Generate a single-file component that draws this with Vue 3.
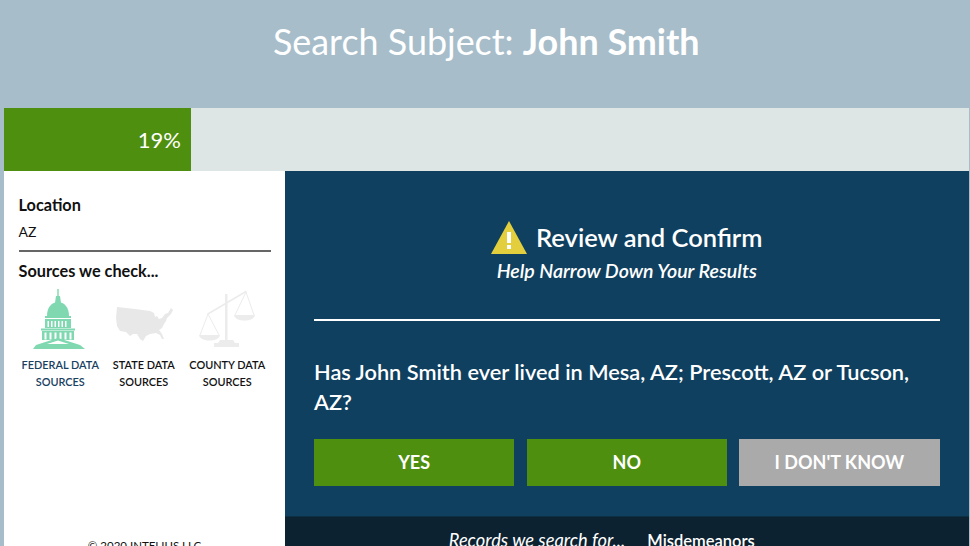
<template>
  <div class="page">
    <header class="subject">
      <h1>Search Subject: <b>{{ subject }}</b></h1>
    </header>
    <div class="progress">
      <div class="progress-bar">{{ percent }}%</div>
    </div>
    <div class="main">
      <aside class="side">
        <h3>Location</h3>
        <div class="loc">AZ</div>
        <h3 class="sources-title">Sources we check...</h3>
        <div class="sources">
          <div class="source active">
            <svg viewBox="0 0 66 66" width="66" height="66">
              <g fill="#7fd8b0">
                <rect x="30.300" y="3" width="1.400" height="7" />
                <path d="M29 10h4l1 7h-6z" />
                <path d="M20 30c0-9 5-14 11-14s11 5 11 14z" />
                <rect x="18" y="30" width="26" height="2" />
                <path d="M18 33h26v9H18zM20.500 35v6h1.500v-6zM24 35v6h1.500v-6zM27.500 35v6h1.500v-6zM31 35v6h1.500v-6zM34.500 35v6h1.500v-6zM38 35v6h1.500v-6z" fill-rule="evenodd" />
                <rect x="14" y="42.500" width="34" height="2" />
                <path d="M15 45h32v9H15zM17.500 46.500v7h2v-7zM22.500 46.500v7h2v-7zM27.500 46.500v7h2v-7zM32.500 46.500v7h2v-7zM37.500 46.500v7h2v-7zM42.500 46.500v7h2v-7z" fill-rule="evenodd" />
                <path d="M9 59l22-7 22 7zM20 58h22l-11-3.500z" fill-rule="evenodd" />
                <path d="M6 63l3-4h44l5 4z" />
              </g>
            </svg>
            <span>FEDERAL DATA SOURCES</span>
          </div>
          <div class="source">
            <svg viewBox="0 -10 70 66" width="70" height="66">
              <path fill="#e8e8e8" d="M8 11L26 13L41 15L45 17L46 21L48 20L50 23L53 22L56 18L59 17L62 12L64 14L62 18L58 22L57 25L55 28L53 32L50 34L53 38L55 43L53 43L51 39L47 37L41 38L37 40L34 45L31 43L28 38L24 38L21 40L17 36L11 35L8 30L7 22Z" />
            </svg>
            <span>STATE DATA SOURCES</span>
          </div>
          <div class="source">
            <svg viewBox="0 0 66 66" width="66" height="66">
              <g fill="#ececec">
                <rect x="31" y="8" width="2.500" height="46" />
                <path d="M26 54h13l2 3H24zM20 57h25v4H20z" />
                <path d="M13 27.500L52 4.500l.8 1.400L13.800 29z" />
                <path d="M5 49h21c-1 4-5 5.500-10.500 5.500S6 53 5 49z" />
                <path d="M40 29h21c-1 4-5 5.500-10.500 5.500S41 33 40 29z" />
              </g>
              <g fill="none" stroke="#ececec" stroke-width="1">
                <path d="M14 28L6 49M14 28l11 21M52 6l-11 23M52 6l8 23" />
              </g>
            </svg>
            <span>COUNTY DATA SOURCES</span>
          </div>
        </div>
        <footer class="copy">© 2020 INTELIUS LLC</footer>
      </aside>
      <section class="panel">
        <div class="panel-body">
          <div class="review">
            <svg class="warn" viewBox="0 0 36 33" width="36" height="33">
              <path d="M18 0l18 33H0z" fill="#e3cf3d" />
              <rect x="16" y="11" width="4" height="11" fill="#fff" />
              <rect x="16" y="24" width="4" height="4" fill="#fff" />
            </svg>
            <h2>Review and Confirm</h2>
          </div>
          <p class="narrow">Help Narrow Down Your Results</p>
          <hr />
          <p class="question">{{ question }}</p>
          <div class="answers">
            <button v-for="a in answers" :key="a.label" :class="{ unsure: a.unsure }">{{ a.label }}</button>
          </div>
        </div>
        <div class="records">
          <i>Records we search for...</i><span>Misdemeanors</span>
        </div>
      </section>
    </div>
  </div>
</template>

<script setup>
const subject = 'John Smith'
const percent = 19
const question = 'Has John Smith ever lived in Mesa, AZ; Prescott, AZ or Tucson, AZ?'
const answers = [
  { label: 'YES' },
  { label: 'NO' },
  { label: "I DON'T KNOW", unsure: true }
]
</script>

<style>
html, body { margin: 0; height: 100%; overflow: hidden; }
</style>

<style scoped>
.page {
  width: 970px;
  height: 546px;
  box-sizing: border-box;
  padding: 0 1.500px 0 4px;
  background: #a7bdca;
  font-family: Lato, "Open Sans", sans-serif;
  display: flex;
  flex-direction: column;
  overflow: hidden;
}
.subject {
  height: 108px;
  flex: none;
  padding-top: 20px;
  box-sizing: border-box;
  text-align: center;
}
.subject h1 {
  margin: 0;
  font-size: 35.900px;
  line-height: 44px;
  font-weight: 400;
  color: #fff;
}
.subject b { font-weight: 700; }
.progress {
  height: 63px;
  flex: none;
  background: #dee5e5;
}
.progress-bar {
  width: 187px;
  height: 100%;
  background: #4f8f0f;
  color: #fff;
  font-size: 22px;
  line-height: 63px;
  text-align: right;
  padding-right: 10px;
  box-sizing: border-box;
}
.main {
  flex: none;
  height: 375px;
  display: flex;
}
.side {
  width: 281px;
  flex: none;
  background: #fff;
  padding: 24px 14.500px 0 14.500px;
  box-sizing: border-box;
  color: #111;
  overflow: hidden;
  position: relative;
}
.side h3 {
  margin: 0;
  font-size: 16.300px;
  line-height: 20px;
  font-weight: 700;
}
.loc {
  margin-top: 7px;
  padding-bottom: 8px;
  border-bottom: 2px solid #666;
  font-size: 14px;
  line-height: 20px;
}
.side h3.sources-title { margin-top: 9px; }
.sources {
  display: grid;
  grid-template-columns: repeat(3, 83.500px);
  margin-top: 5px;
}
.source {
  display: flex;
  flex-direction: column;
  align-items: center;
  text-align: center;
  font-size: 10.900px;
  line-height: 17px;
  font-weight: 600;
}
.source svg { display: block; margin-bottom: 4px; }
.source span { display: block; }
.source.active { color: #17415f; }
.copy {
  position: absolute;
  left: 0;
  right: 0;
  top: 368px;
  text-align: center;
  font-size: 11.500px;
  line-height: 14px;
}
.panel {
  flex: 1;
  background: #0f405f;
  color: #fff;
  display: flex;
  flex-direction: column;
}
.panel-body {
  height: 345px;
  flex: none;
  box-sizing: border-box;
  padding: 50px 29px 0;
}
.review {
  display: flex;
  align-items: center;
  justify-content: center;
  gap: 9px;
  height: 33px;
}
.review h2 {
  margin: 0;
  font-size: 25.500px;
  line-height: 33px;
  font-weight: 600;
}
.narrow {
  margin: 5px 0 0;
  text-align: center;
  font-style: italic;
  font-weight: 600;
  font-size: 19.600px;
  line-height: 24px;
}
hr {
  margin: 36px 0 0;
  border: 0;
  border-top: 2px solid #fff;
}
.question {
  margin: 36px 0 0;
  font-size: 21.750px;
  line-height: 30px;
  font-weight: 600;
}
.answers {
  display: grid;
  grid-template-columns: repeat(3, 1fr);
  gap: 12.500px;
  margin-top: 22px;
}
.answers button {
  height: 46.500px;
  border: 0;
  padding: 0;
  background: #4f8f0f;
  color: #fff;
  font-family: inherit;
  font-size: 18px;
  font-weight: 700;
}
.answers button.unsure { background: #aaaaaa; }
.records {
  flex: 1;
  background: #0c2230;
  border-top: 1px solid #0d3044;
  text-align: center;
  font-size: 18.300px;
  line-height: 24px;
  padding: 11px 50px 0 0;
}
.records i { font-weight: 400; }
.records span {
  margin-left: 22px;
  font-size: 16.500px;
  font-weight: 600;
}
</style>
